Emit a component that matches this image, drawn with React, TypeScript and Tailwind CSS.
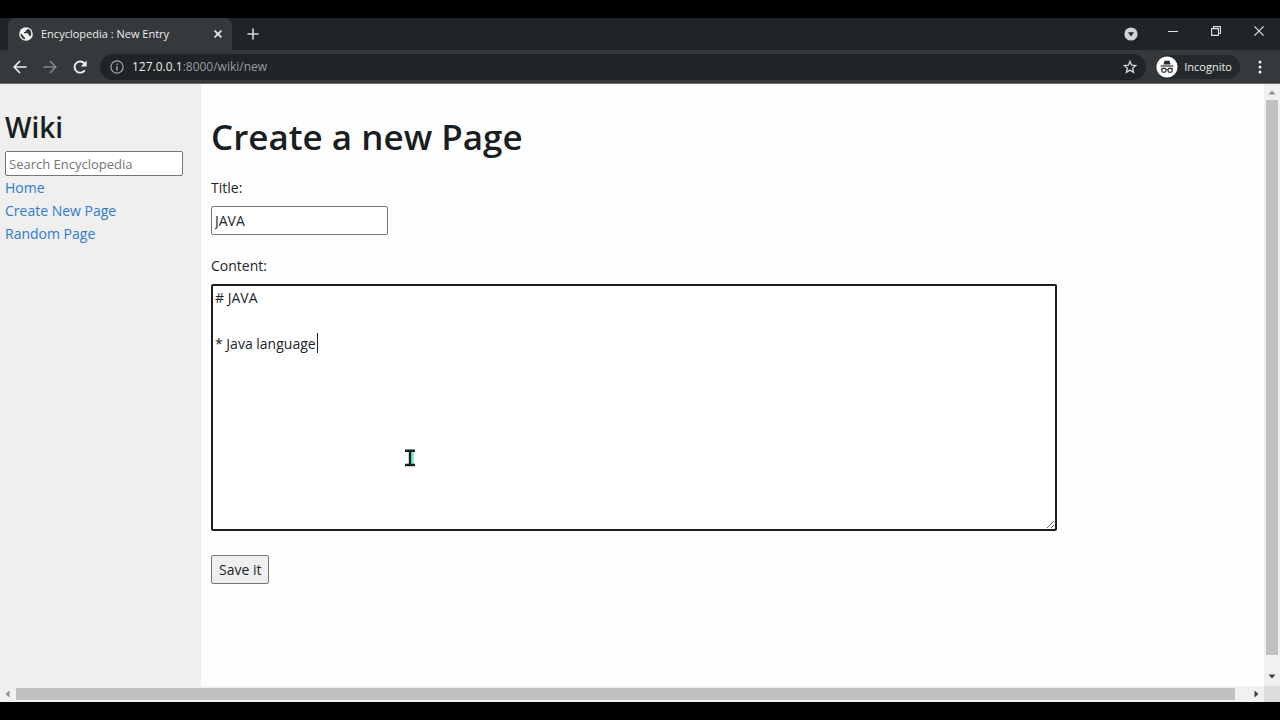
import { useState } from "react";
import type { ReactNode } from "react";

const links = [
  { label: "Home", href: "#home" },
  { label: "Create New Page", href: "#new" },
  { label: "Random Page", href: "#random" },
];

interface IconButtonProps {
  label: string;
  className: string;
  children: ReactNode;
}

function IconButton({ label, className, children }: IconButtonProps) {
  return (
    <button type="button" aria-label={label} className={`flex shrink-0 items-center justify-center ${className}`}>
      {children}
    </button>
  );
}

function GlobeIcon() {
  return (
    <svg width="14" height="14" viewBox="0 0 14 14" className="shrink-0">
      <circle cx="7" cy="7" r="6.8" fill="#f4f5f5" />
      <path
        d="M1.6 6.2 4.6 8.9v1l1.5.9v1.4C3.2 11.9 1.3 9.4 1.6 6.2ZM8.2 2c-.2 1-.6 1.4-1.5 1.5L6.4 5H5v1.3h3.6l1.1 1.2v1.2h1.1l.7.7c1.5-2.6.7-5.9-1.5-7.1L8.2 2Z"
        fill="#35383b"
      />
    </svg>
  );
}

function IncognitoIcon() {
  return (
    <svg width="22" height="22" viewBox="0 0 22 22" className="shrink-0">
      <circle cx="11" cy="11" r="10.6" fill="#fff" />
      <path d="M7.4 8.6 8.5 5c.2-.6.6-.7 1.1-.5l1.4.4 1.4-.4c.5-.2.9-.1 1.1.5l1.1 3.6Z" fill="#2b2e31" />
      <path d="M4.6 10h12.8" stroke="#2b2e31" strokeWidth="1.2" />
      <g fill="none" stroke="#2b2e31" strokeWidth="1.1">
        <circle cx="7.9" cy="14.2" r="2.1" />
        <circle cx="14.1" cy="14.2" r="2.1" />
        <path d="M10 13.8q1-.7 2 0M5.2 12.6h1.2M15.6 12.6h1.2" />
      </g>
    </svg>
  );
}

function TabStrip() {
  return (
    <div className="flex h-8 shrink-0 items-stretch bg-[#202426] pl-2">
      <div className="flex w-56 items-center rounded-t-lg bg-[#35393c] pr-[6px] pl-[11px] text-[#eceded]">
        <GlobeIcon />
        <span className="ml-2 flex-1 truncate text-[11px]">Encyclopedia : New Entry</span>
        <IconButton label="Close tab" className="size-4">
          <svg width="8" height="8" viewBox="0 0 8 8" stroke="currentColor" strokeWidth="1.6">
            <path d="m.6.6 6.8 6.8M7.4.6.6 7.4" />
          </svg>
        </IconButton>
      </div>
      <IconButton label="New tab" className="w-[42px] text-[#d5d7d8]">
        <svg width="12" height="12" viewBox="0 0 12 12" stroke="currentColor" strokeWidth="1.6">
          <path d="M6 .5v11M.5 6h11" />
        </svg>
      </IconButton>
      <div className="flex-1" />
      <IconButton label="Search tabs" className="w-10">
        <svg width="14" height="14" viewBox="0 0 14 14">
          <circle cx="7" cy="7" r="6.6" fill="#d0d2d3" />
          <path d="M3.9 5.3h6.2L7 9.6Z" fill="#25282a" />
        </svg>
      </IconButton>
      <div className="flex items-stretch pb-[6px] text-[#e4e5e6]">
        <IconButton label="Minimize" className="w-[43px]">
          <svg width="10" height="10" viewBox="0 0 10 10" stroke="currentColor">
            <path d="M0 5.5h10" />
          </svg>
        </IconButton>
        <IconButton label="Restore" className="w-[43px]">
          <svg width="10" height="10" viewBox="0 0 10 10" fill="none" stroke="currentColor" strokeWidth="1.1">
            <path d="M.6 2.6h6.8v6.8H.6zM2.5 2.4V.6h6.9v6.9H7.6" />
          </svg>
        </IconButton>
        <IconButton label="Close window" className="w-[43px]">
          <svg width="10" height="10" viewBox="0 0 10 10" stroke="currentColor" strokeWidth="1.2">
            <path d="m.4.4 9.2 9.2M9.6.4.4 9.6" />
          </svg>
        </IconButton>
      </div>
    </div>
  );
}

function Toolbar() {
  return (
    <div className="flex h-[34px] shrink-0 items-center gap-[10px] border-b border-[#6b6e70] bg-[#35393c] px-[10px] text-[#eceded]">
      <IconButton label="Back" className="size-5">
        <svg width="14" height="14" viewBox="0 0 14 14" fill="none" stroke="currentColor" strokeWidth="1.7">
          <path d="M13.6 7H1.4M7 1 1.2 7 7 13" />
        </svg>
      </IconButton>
      <IconButton label="Forward" className="size-5 text-[#85888a]">
        <svg width="14" height="14" viewBox="0 0 14 14" fill="none" stroke="currentColor" strokeWidth="1.6">
          <path d="M.4 7h12.2M7 1l5.8 6L7 13" />
        </svg>
      </IconButton>
      <IconButton label="Reload" className="size-5">
        <svg width="14" height="14" viewBox="0 0 14 14">
          <path d="M11.8 10.2A5.6 5.6 0 1 1 11.4 3.4" fill="none" stroke="currentColor" strokeWidth="1.9" />
          <path d="M13.6.4v6H7.7Z" fill="currentColor" />
        </svg>
      </IconButton>
      <div className="flex h-[26px] flex-1 items-center rounded-full bg-[#202426] px-[10px]">
        <svg width="14" height="14" viewBox="0 0 14 14" fill="none" stroke="#a5a8aa" className="shrink-0">
          <circle cx="7" cy="7" r="6.1" strokeWidth="1.2" />
          <path d="M7 6.2v4.2M7 3.4v1.5" strokeWidth="1.5" />
        </svg>
        <a href="#new" className="ml-2 flex-1 text-xs text-[#999da0]">
          <span className="text-[#eceded]">127.0.0.1</span>:8000/wiki/new
        </a>
        <IconButton label="Bookmark this page" className="size-3">
          <svg width="14" height="14" viewBox="0 0 14 14" fill="none" stroke="#d5d7d8" strokeWidth="1.3" className="shrink-0">
            <path d="m7 1.3 1.6 3.9 4.2.3-3.2 2.7 1 4.1L7 10.1l-3.6 2.2 1-4.1-3.2-2.7 4.2-.3Z" />
          </svg>
        </IconButton>
      </div>
      <div className="flex h-6 items-center gap-[6px] rounded-full bg-[#25292b] pr-2">
        <IncognitoIcon />
        <span className="text-[11px]">Incognito</span>
      </div>
      <IconButton label="Menu" className="size-5">
        <svg width="4" height="14" viewBox="0 0 4 14" fill="currentColor">
          <circle cx="2" cy="2" r="1.5" />
          <circle cx="2" cy="7" r="1.5" />
          <circle cx="2" cy="12" r="1.5" />
        </svg>
      </IconButton>
    </div>
  );
}

function Sidebar() {
  return (
    <aside className="w-[201px] shrink-0 bg-[#efefef] px-[5px] pt-[25px]">
      <h2 className="text-[28px] leading-9 font-semibold text-[#1b1e21]">Wiki</h2>
      <input
        type="text"
        name="q"
        aria-label="Search Encyclopedia"
        placeholder="Search Encyclopedia"
        className="mt-[6px] block h-[25px] w-[178px] rounded-xs border border-[#767676] bg-white px-[3px] text-[13px] placeholder:text-[#757575]"
      />
      <nav className="flex flex-col items-start leading-[23px]">
        {links.map((link) => (
          <a key={link.label} href={link.href} className="text-[#2f7bd0] hover:underline">
            {link.label}
          </a>
        ))}
      </nav>
    </aside>
  );
}

function EntryForm() {
  const [title, setTitle] = useState("JAVA");
  const [content, setContent] = useState("# JAVA\n\n* Java language");

  return (
    <main className="min-w-0 flex-1 bg-[#fefefe] px-[10px] pt-[26px]">
      <h1 className="text-[35px] leading-[54px] font-semibold text-[#1b1e21]">Create a new Page</h1>
      <form onSubmit={(e) => e.preventDefault()}>
        <label htmlFor="title" className="mt-3 block leading-[23px]">
          Title:
        </label>
        <input
          id="title"
          type="text"
          value={title}
          onChange={(e) => setTitle(e.target.value)}
          className="mt-[7px] block h-[29px] w-[177px] rounded-xs border border-[#767676] bg-white px-[3px]"
        />
        <label htmlFor="content" className="mt-[19px] block leading-[23px]">
          Content:
        </label>
        <div className="relative mt-[7px] w-[82%] max-w-[846px]">
          <textarea
            id="content"
            value={content}
            onChange={(e) => setContent(e.target.value)}
            className="block h-[247px] w-full resize rounded-xs border-2 border-[#1c1d1e] bg-white px-[2px] py-0 leading-[23px] outline-none"
          />
          {/* text caret and mouse pointer */}
          <span className="absolute top-[49px] left-[106px] h-5 w-px bg-[#212529]" />
          <svg width="12" height="18" viewBox="0 0 12 18" className="absolute top-[165px] left-[193px]">
            <path d="M7 2h3v13H7z" fill="#7ff0c8" />
            <path d="M1 1.8h10M1 16h10M6 1.8V16" stroke="#14231f" strokeWidth="2.4" fill="none" />
          </svg>
        </div>
        <button
          type="submit"
          className="mt-6 block h-[29px] rounded-xs border border-[#767676] bg-[#efefef] px-[7px]"
        >
          Save it
        </button>
      </form>
    </main>
  );
}

function VerticalScrollbar() {
  return (
    <div className="flex w-4 shrink-0 flex-col items-center bg-[#f1f1f1] pt-[6px] pb-[7px]">
      <svg width="8" height="5" viewBox="0 0 8 5" className="shrink-0">
        <path d="M4 .5 7.5 4.5h-7Z" fill="#909090" />
      </svg>
      <div className="my-[5px] w-3 flex-1 bg-[#c1c1c1]" />
      <svg width="8" height="5" viewBox="0 0 8 5" className="mt-[14px] shrink-0">
        <path d="M4 4.5.5.5h7Z" fill="#404040" />
      </svg>
    </div>
  );
}

function HorizontalScrollbar() {
  return (
    <div className="flex h-4 shrink-0 bg-[#dcdcdc]">
      <div className="flex flex-1 items-center bg-[#f1f1f1] px-[5px]">
        <svg width="5" height="8" viewBox="0 0 5 8">
          <path d="M.5 4 4.5.5v7Z" fill="#909090" />
        </svg>
        <div className="mr-[19px] ml-[6px] h-3 flex-1 bg-[#c1c1c1]" />
        <svg width="5" height="8" viewBox="0 0 5 8">
          <path d="M4.5 4 .5.5v7Z" fill="#404040" />
        </svg>
      </div>
      <div className="w-4" />
    </div>
  );
}

export default function App() {
  return (
    <div className="flex h-screen flex-col bg-black py-[18px] font-['Open_Sans','Noto_Sans',sans-serif] text-sm text-[#212529]">
      <TabStrip />
      <Toolbar />
      <div className="flex min-h-0 flex-1">
        <Sidebar />
        <EntryForm />
        <VerticalScrollbar />
      </div>
      <HorizontalScrollbar />
    </div>
  );
}
